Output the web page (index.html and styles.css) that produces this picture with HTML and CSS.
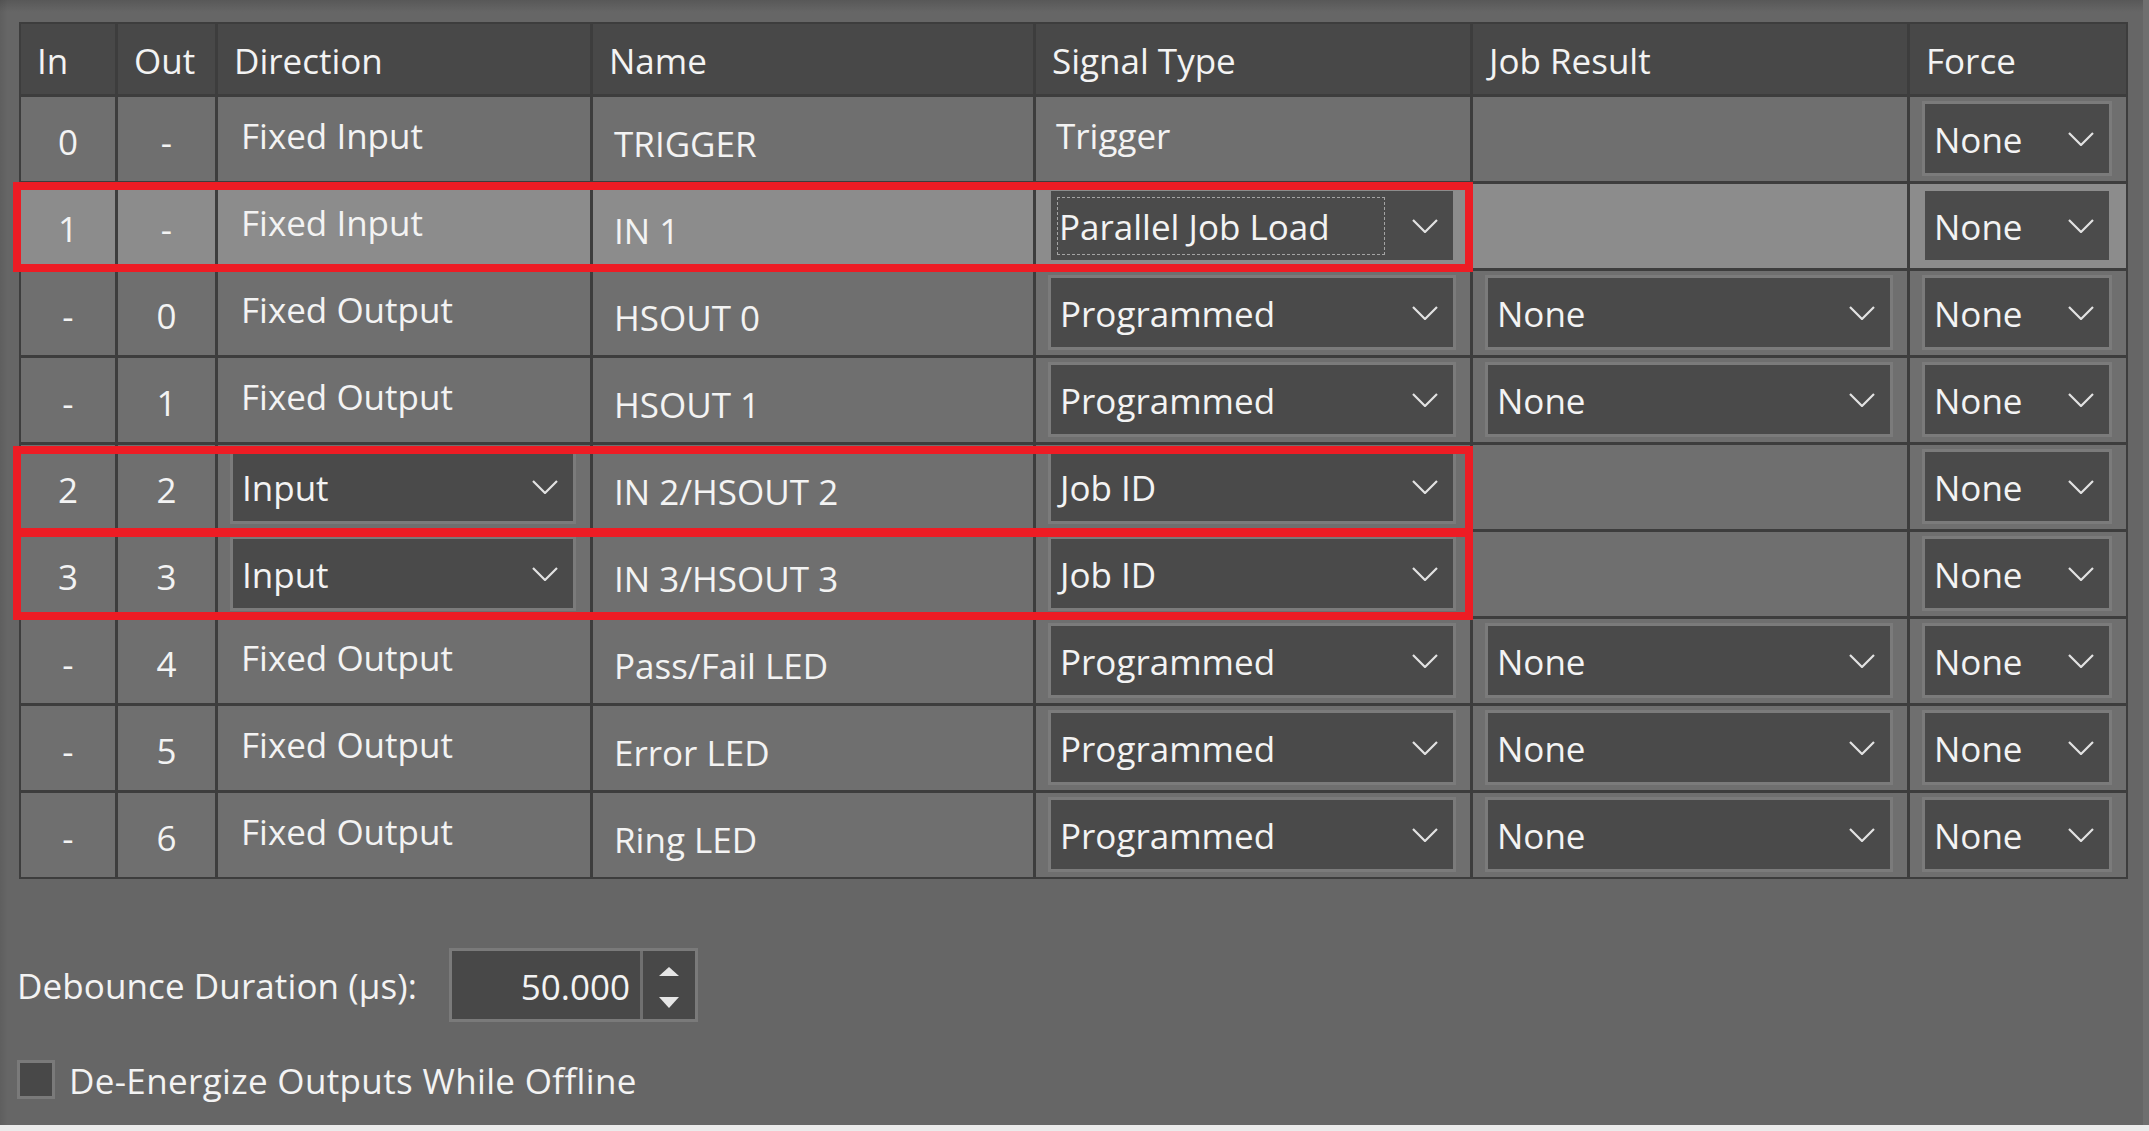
FILE: index.html
```html
<!DOCTYPE html>
<html lang="en">
<head>
  <meta charset="UTF-8" />
  <title>Discrete I/O</title>
  <link rel="stylesheet" href="styles.css">
</head>
<body>

<div class="panel">

  <div class="grid">
    <div class="row head">
      <div>In</div><div>Out</div><div>Direction</div><div>Name</div><div>Signal Type</div><div>Job Result</div><div>Force</div>
    </div>

    <div class="row">
      <div class="num">0</div>
      <div class="num">-</div>
      <div class="txt">Fixed Input</div>
      <div class="name">TRIGGER</div>
      <div class="txt sig">Trigger</div>
      <div></div>
      <div class="ctl"><div class="dd"><span>None</span><svg viewBox="0 0 26 14"><path d="M1 1 L13 13 L25 1"/></svg></div></div>
    </div>

    <div class="row sel">
      <div class="num">1</div>
      <div class="num">-</div>
      <div class="txt">Fixed Input</div>
      <div class="name">IN 1</div>
      <div class="ctl"><div class="dd"><span class="focus">Parallel Job Load</span><svg viewBox="0 0 26 14"><path d="M1 1 L13 13 L25 1"/></svg></div></div>
      <div></div>
      <div class="ctl"><div class="dd"><span>None</span><svg viewBox="0 0 26 14"><path d="M1 1 L13 13 L25 1"/></svg></div></div>
    </div>

    <div class="row">
      <div class="num">-</div>
      <div class="num">0</div>
      <div class="txt">Fixed Output</div>
      <div class="name">HSOUT 0</div>
      <div class="ctl"><div class="dd"><span>Programmed</span><svg viewBox="0 0 26 14"><path d="M1 1 L13 13 L25 1"/></svg></div></div>
      <div class="ctl"><div class="dd"><span>None</span><svg viewBox="0 0 26 14"><path d="M1 1 L13 13 L25 1"/></svg></div></div>
      <div class="ctl"><div class="dd"><span>None</span><svg viewBox="0 0 26 14"><path d="M1 1 L13 13 L25 1"/></svg></div></div>
    </div>

    <div class="row">
      <div class="num">-</div>
      <div class="num">1</div>
      <div class="txt">Fixed Output</div>
      <div class="name">HSOUT 1</div>
      <div class="ctl"><div class="dd"><span>Programmed</span><svg viewBox="0 0 26 14"><path d="M1 1 L13 13 L25 1"/></svg></div></div>
      <div class="ctl"><div class="dd"><span>None</span><svg viewBox="0 0 26 14"><path d="M1 1 L13 13 L25 1"/></svg></div></div>
      <div class="ctl"><div class="dd"><span>None</span><svg viewBox="0 0 26 14"><path d="M1 1 L13 13 L25 1"/></svg></div></div>
    </div>

    <div class="row">
      <div class="num">2</div>
      <div class="num">2</div>
      <div class="ctl"><div class="dd"><span>Input</span><svg viewBox="0 0 26 14"><path d="M1 1 L13 13 L25 1"/></svg></div></div>
      <div class="name">IN 2/HSOUT 2</div>
      <div class="ctl"><div class="dd"><span>Job ID</span><svg viewBox="0 0 26 14"><path d="M1 1 L13 13 L25 1"/></svg></div></div>
      <div></div>
      <div class="ctl"><div class="dd"><span>None</span><svg viewBox="0 0 26 14"><path d="M1 1 L13 13 L25 1"/></svg></div></div>
    </div>

    <div class="row">
      <div class="num">3</div>
      <div class="num">3</div>
      <div class="ctl"><div class="dd"><span>Input</span><svg viewBox="0 0 26 14"><path d="M1 1 L13 13 L25 1"/></svg></div></div>
      <div class="name">IN 3/HSOUT 3</div>
      <div class="ctl"><div class="dd"><span>Job ID</span><svg viewBox="0 0 26 14"><path d="M1 1 L13 13 L25 1"/></svg></div></div>
      <div></div>
      <div class="ctl"><div class="dd"><span>None</span><svg viewBox="0 0 26 14"><path d="M1 1 L13 13 L25 1"/></svg></div></div>
    </div>

    <div class="row">
      <div class="num">-</div>
      <div class="num">4</div>
      <div class="txt">Fixed Output</div>
      <div class="name">Pass/Fail LED</div>
      <div class="ctl"><div class="dd"><span>Programmed</span><svg viewBox="0 0 26 14"><path d="M1 1 L13 13 L25 1"/></svg></div></div>
      <div class="ctl"><div class="dd"><span>None</span><svg viewBox="0 0 26 14"><path d="M1 1 L13 13 L25 1"/></svg></div></div>
      <div class="ctl"><div class="dd"><span>None</span><svg viewBox="0 0 26 14"><path d="M1 1 L13 13 L25 1"/></svg></div></div>
    </div>

    <div class="row">
      <div class="num">-</div>
      <div class="num">5</div>
      <div class="txt">Fixed Output</div>
      <div class="name">Error LED</div>
      <div class="ctl"><div class="dd"><span>Programmed</span><svg viewBox="0 0 26 14"><path d="M1 1 L13 13 L25 1"/></svg></div></div>
      <div class="ctl"><div class="dd"><span>None</span><svg viewBox="0 0 26 14"><path d="M1 1 L13 13 L25 1"/></svg></div></div>
      <div class="ctl"><div class="dd"><span>None</span><svg viewBox="0 0 26 14"><path d="M1 1 L13 13 L25 1"/></svg></div></div>
    </div>

    <div class="row">
      <div class="num">-</div>
      <div class="num">6</div>
      <div class="txt">Fixed Output</div>
      <div class="name">Ring LED</div>
      <div class="ctl"><div class="dd"><span>Programmed</span><svg viewBox="0 0 26 14"><path d="M1 1 L13 13 L25 1"/></svg></div></div>
      <div class="ctl"><div class="dd"><span>None</span><svg viewBox="0 0 26 14"><path d="M1 1 L13 13 L25 1"/></svg></div></div>
      <div class="ctl"><div class="dd"><span>None</span><svg viewBox="0 0 26 14"><path d="M1 1 L13 13 L25 1"/></svg></div></div>
    </div>
  </div>

  <div class="debounce">
    <span class="lbl">Debounce Duration (µs):</span>
    <div class="spin">
      <span class="val">50.000</span>
      <div class="arrows">
        <svg viewBox="0 0 20 41"><polygon points="10,0 20,9 0,9"/><polygon points="0,30 20,30 10,41"/></svg>
      </div>
    </div>
  </div>

  <div class="check">
    <span class="box"></span>
    <span class="txt2">De-Energize Outputs While Offline</span>
  </div>

  <!-- red call-out boxes drawn over the rows -->
  <div class="mark mark-a"></div>
  <div class="mark mark-b"></div>
  <div class="mark mark-c"></div>

</div>

</body>
</html>
```

FILE: styles.css
```css
* {
  margin: 0; padding: 0; box-sizing: border-box;
}

body {
  background: #ebebeb;
  font-family: 'Open Sans', 'Noto Sans', sans-serif;
  font-size: 35px;
  line-height: 42px;
  color: #f3f3f3;
}

.panel {
  position: relative;
  height: 1125px;
  padding: 22px 0 0 19px;
  background:
    linear-gradient(90deg, rgba(0,0,0,0.07), rgba(0,0,0,0) 8px),
    linear-gradient(#585858, #666 12px);
  border-right: 6px solid #6f6f6f;
}

/* table */
.grid {
  width: 2109px;
  padding: 2px;
  background: #3d3d3d;
  display: flex;
  flex-direction: column;
  gap: 3px;
}

.row {
  display: grid;
  grid-template-columns: 94px 97px 372px 440px 434px 434px 216px;
  gap: 3px;
  height: 84px;
}

.row > div {
  background: #6f6f6f;
  white-space: nowrap;
}

.row.head { height: 70px; }

.row.head > div {
  background: #484848;
  padding: 16px 0 0 16px;
}

.row.sel > div { background: #8c8c8c; }

.num {
  text-align: center;
  padding-top: 24px;
}

.txt { padding: 18px 0 0 23px; }
.txt.sig { padding-left: 20px; }

.name { padding: 26px 0 0 21px; }

.ctl { padding: 4px 14px 5px 12px; }

/* combo boxes */
.dd {
  height: 100%;
  display: flex;
  align-items: center;
  justify-content: space-between;
  padding: 0 15px 0 9px;
  background: #4a4a4a;
  border: 3px solid #7b7b7b;
}

.sel .dd {
  border-color: #8c8c8c;
  background: #4b4b4b;
}

.dd span { padding-top: 2px; }

.dd svg {
  width: 26px;
  height: 14px;
  fill: none;
  stroke: #e2e2e2;
  stroke-width: 2.2;
}

.dd .focus {
  width: 328px;
  margin-left: -3px;
  padding: 8px 0 6px 1px;
  border: 1px dashed #a4a4a4;
}

/* bottom options */
.debounce {
  display: flex;
  align-items: center;
  margin: 69px 0 0 -2px;
}

.debounce .lbl {
  width: 432px;
  padding-top: 2px;
  letter-spacing: 0.1px;
}

.spin {
  display: flex;
  width: 249px;
  height: 74px;
  border: 3px solid #7a7a7a;
  background: #484848;
}

.spin .val {
  width: 188px;
  text-align: right;
  padding: 2px 10px 0 0;
  line-height: 68px;
}

.spin .arrows {
  width: 55px;
  border-left: 3px solid #707070;
  display: flex;
  align-items: center;
  justify-content: center;
}

.spin .arrows svg {
  width: 20px;
  height: 41px;
  margin-top: 5px;
  fill: #e6e6e6;
}

.check {
  display: flex;
  align-items: center;
  gap: 14px;
  margin: 35px 0 0 -2px;
}

.check .box {
  width: 38px;
  height: 39px;
  border: 3px solid #7a7a7a;
  background: #484848;
}

.check .txt2 {
  padding-top: 3px;
  letter-spacing: 0.35px;
}

.mark {
  position: absolute;
  left: 13px;
  width: 1460px;
  border: 8px solid #ed1c24;
}

.mark-a { top: 182px; height: 90px; }
.mark-b { top: 446px; height: 91px; }
.mark-c { top: 528px; height: 92px; }
```
